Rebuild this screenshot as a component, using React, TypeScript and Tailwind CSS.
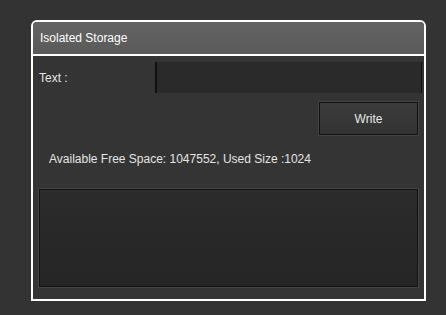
import React from "react";

export default function App() {
  return (
    <div
      className="w-[446px] h-[315px] bg-[#333333] pt-[20px] pl-[31px]"
      style={{ fontFamily: '"Liberation Sans", Arial, sans-serif' }}
    >
      <div className="w-[395px] h-[281px] border-2 border-white rounded-t-[6px] bg-[#343434] flex flex-col overflow-hidden">
        <div className="h-[34px] shrink-0 bg-gradient-to-b from-[#636363] to-[#5a5a5a] border-b-2 border-white flex items-center pl-[7px] text-[12px] text-white">
          Isolated Storage
        </div>
        <div className="flex mt-[6px] h-[31px] items-center">
          <div className="w-[122px] pl-[6px] text-[12px] text-[#e4e4e4]">Text :</div>
          <div className="w-[267px] h-[31px] bg-[#2a2a2a] border-l-2 border-l-[#111] border-r border-r-[#111]" />
        </div>
        <div className="flex justify-end mt-[9px] pr-[6px]">
          <button className="w-[99px] h-[33px] border border-[#111] bg-gradient-to-b from-[#3b3b3b] to-[#333] text-[12px] text-[#e8e8e8] outline outline-1 outline-[#444]">
            Write
          </button>
        </div>
        <div className="mt-[17px] pl-[16px] h-[14px] leading-[14px] text-[12px] text-[#e4e4e4]">
          Available Free Space: 1047552, Used Size :1024
        </div>
        <div className="mt-[23px] ml-[6px] w-[379px] h-[98px] border border-[#111] outline outline-1 outline-[#444] bg-gradient-to-b from-[#2c2c2c] via-[#282828] to-[#262626]" />
      </div>
    </div>
  );
}
